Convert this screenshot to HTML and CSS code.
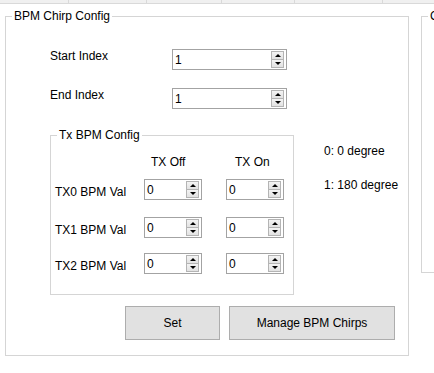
FILE: index.html
```html
<!DOCTYPE html>
<html lang="en">
<head>
    <meta charset="UTF-8">
    <meta name="viewport" content="width=device-width, initial-scale=1.0">
    <title>BPM Chirp Config</title>
    <link rel="stylesheet" href="styles.css">
</head>
<body>
    <div class="tab-strip">
        <span class="tab tab-1"></span>
        <span class="tab tab-2"></span>
        <span class="tab tab-3"></span>
        <span class="tab tab-4"></span>
        <span class="tab tab-5"></span>
    </div>

    <div class="panels">
        <fieldset class="group group-main">
            <legend>BPM Chirp Config</legend>
            <div class="main-body">
                <div class="index-row">
                    <label class="index-label">Start Index</label>
                    <div class="spinbox spinbox-wide">
                        <span class="spin-value">1</span>
                        <span class="spin"><span class="spin-up"></span><span class="spin-down"></span></span>
                    </div>
                </div>
                <div class="index-row index-row-end">
                    <label class="index-label">End Index</label>
                    <div class="spinbox spinbox-wide">
                        <span class="spin-value">1</span>
                        <span class="spin"><span class="spin-up"></span><span class="spin-down"></span></span>
                    </div>
                </div>

                <div class="tx-area">
                    <fieldset class="group group-tx">
                        <legend>Tx BPM Config</legend>
                        <div class="tx-grid">
                            <span></span>
                            <span class="col-head head-off">TX Off</span>
                            <span class="col-head head-on">TX On</span>

                            <span class="row-label">TX0 BPM Val</span>
                            <div class="spinbox">
                                <span class="spin-value">0</span>
                                <span class="spin"><span class="spin-up"></span><span class="spin-down"></span></span>
                            </div>
                            <div class="spinbox">
                                <span class="spin-value">0</span>
                                <span class="spin"><span class="spin-up"></span><span class="spin-down"></span></span>
                            </div>

                            <span class="row-label">TX1 BPM Val</span>
                            <div class="spinbox">
                                <span class="spin-value">0</span>
                                <span class="spin"><span class="spin-up"></span><span class="spin-down"></span></span>
                            </div>
                            <div class="spinbox">
                                <span class="spin-value">0</span>
                                <span class="spin"><span class="spin-up"></span><span class="spin-down"></span></span>
                            </div>

                            <span class="row-label">TX2 BPM Val</span>
                            <div class="spinbox">
                                <span class="spin-value">0</span>
                                <span class="spin"><span class="spin-up"></span><span class="spin-down"></span></span>
                            </div>
                            <div class="spinbox">
                                <span class="spin-value">0</span>
                                <span class="spin"><span class="spin-up"></span><span class="spin-down"></span></span>
                            </div>
                        </div>
                    </fieldset>

                    <div class="notes">
                        <p>0: 0 degree</p>
                        <p class="note-second">1: 180 degree</p>
                    </div>
                </div>

                <div class="actions">
                    <button class="btn btn-set">Set</button>
                    <button class="btn btn-manage">Manage BPM Chirps</button>
                </div>
            </div>
        </fieldset>

        <fieldset class="group group-side">
            <legend>Chirp Info</legend>
        </fieldset>
    </div>
</body>
</html>
```

FILE: styles.css
```css
* {
    margin: 0;
    padding: 0;
    box-sizing: border-box;
}

html,
body {
    overflow: hidden;
}

body {
    background: #ffffff;
    color: #000000;
    font-family: "Liberation Sans", Arial, sans-serif;
    font-size: 12px;
    line-height: 14px;
}

/* tab strip peeking at the top */
.tab-strip {
    display: flex;
    height: 4px;
    background: #f0f0f0;
    border-bottom: 1px solid #d9d9d9;
}

.tab {
    border-right: 1px solid #d9d9d9;
}

.tab-1 { width: 69px; }
.tab-2 { width: 78px; }
.tab-3 { width: 75px; }
.tab-4 { width: 73px; }
.tab-5 { width: 88px; }

.panels {
    display: flex;
    gap: 12px;
    padding-left: 5px;
    margin-top: 5px;
}

/* group boxes */
.group {
    border: 1px solid #d5d5d5;
    min-inline-size: 0;
    flex-shrink: 0;
}

.group legend {
    margin-left: 6px;
    padding: 0 2px;
    line-height: 14px;
}

.group-main {
    width: 404px;
    height: 347px;
}

.group-side {
    width: 200px;
    height: 264px;
}

.main-body {
    padding: 26px 0 0 44px;
}

.index-row {
    display: flex;
    align-items: flex-start;
}

.index-row-end {
    margin-top: 18px;
}

.index-label {
    width: 122px;
}

/* numeric up-down */
.spinbox {
    display: flex;
    align-items: center;
    width: 58px;
    height: 21px;
    border: 1px solid #a3a3a3;
    background: #ffffff;
}

.spinbox-wide {
    width: 115px;
}

.spin-value {
    flex: 1;
    padding-left: 2px;
}

.spin {
    display: flex;
    flex-direction: column;
    align-self: stretch;
    width: 13px;
    margin: 1px 2px 1px 0;
    border: 1px solid #b4b4b4;
}

.spin-up,
.spin-down {
    flex: 1;
    display: flex;
    align-items: center;
    justify-content: center;
    background: linear-gradient(#f4f4f4, #e2e2e2);
}

.spin-up {
    border-bottom: 1px solid #b4b4b4;
}

.spin-up::before,
.spin-down::before {
    content: "";
    border-left: 3px solid transparent;
    border-right: 3px solid transparent;
}

.spin-up::before {
    border-bottom: 3px solid #000000;
}

.spin-down::before {
    border-top: 3px solid #000000;
}

/* Tx BPM section */
.tx-area {
    display: flex;
    align-items: flex-start;
    margin-top: 19px;
}

.group-tx {
    width: 244px;
    height: 167px;
}

.tx-grid {
    display: grid;
    grid-template-columns: 89px 82px 58px;
    grid-template-rows: 24px 38px 36px 21px;
    align-items: start;
    padding: 13px 0 0 4px;
}

.col-head {
    padding-left: 7px;
}

.head-on {
    padding-left: 9px;
}

.row-label {
    padding-top: 6px;
}

.notes {
    margin: 16px 0 0 30px;
}

.note-second {
    margin-top: 20px;
}

/* buttons */
.actions {
    display: flex;
    gap: 9px;
    margin-top: 11px;
    padding-left: 75px;
}

.btn {
    height: 34px;
    background: #e1e1e1;
    border: 1px solid #adadad;
    font-family: inherit;
    font-size: 12px;
    color: #000000;
}

.btn-set {
    width: 95px;
}

.btn-manage {
    width: 166px;
}
```
